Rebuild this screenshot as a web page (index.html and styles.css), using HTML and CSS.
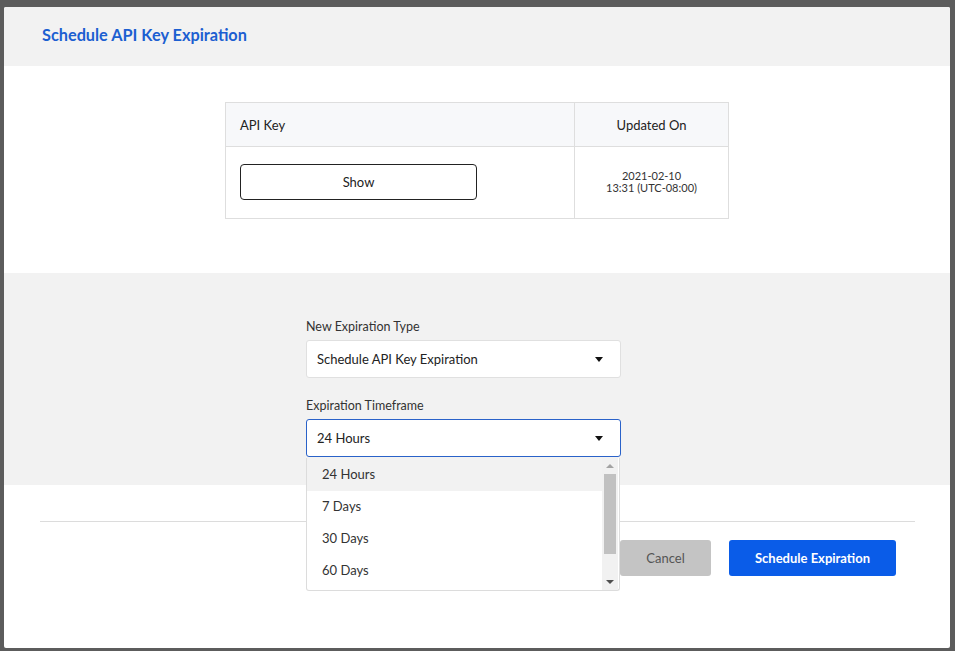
FILE: index.html
```html
<!DOCTYPE html>
<html lang="en">

<head>
    <meta charset="UTF-8">
    <title>Schedule API Key Expiration</title>
    <link rel="stylesheet" href="styles.css">
</head>

<body>
    <div class="modal">
        <header class="modal-head">
            <h1>Schedule API Key Expiration</h1>
        </header>

        <section class="key-section">
            <table class="key-table">
                <thead>
                    <tr>
                        <th class="col-key">API Key</th>
                        <th class="col-date">Updated On</th>
                    </tr>
                </thead>
                <tbody>
                    <tr>
                        <td class="col-key"><button class="show-btn">Show</button></td>
                        <td class="col-date date-cell">2021-02-10<br>13:31 (UTC-08:00)</td>
                    </tr>
                </tbody>
            </table>
        </section>

        <section class="form-section">
            <div class="form">
                <label class="field-label">New Expiration Type</label>
                <div class="select">
                    <span>Schedule API Key Expiration</span>
                    <i class="caret"></i>
                </div>

                <label class="field-label">Expiration Timeframe</label>
                <div class="select-wrap">
                    <div class="select focused">
                        <span>24 Hours</span>
                        <i class="caret"></i>
                    </div>
                    <div class="dropdown">
                        <ul class="options">
                            <li class="active">24 Hours</li>
                            <li>7 Days</li>
                            <li>30 Days</li>
                            <li>60 Days</li>
                        </ul>
                        <div class="scrollbar">
                            <i class="arrow up"></i>
                            <div class="thumb"></div>
                            <i class="arrow down"></i>
                        </div>
                    </div>
                </div>
            </div>
        </section>

        <footer class="modal-foot">
            <div class="actions">
                <button class="btn cancel">Cancel</button>
                <button class="btn primary">Schedule Expiration</button>
            </div>
        </footer>
    </div>
</body>

</html>
```

FILE: styles.css
```css
* {
    box-sizing: border-box;
}

body {
    margin: 0;
    background-color: #5c5c5c;
    font-family: Lato, "Open Sans", sans-serif;
    color: #333;
}

.modal {
    margin: 7px 5px 0 4px;
    width: 946px;
    height: 641px;
    background-color: #fff;
    border-radius: 2px;
    display: flex;
    flex-direction: column;
}

.modal-head {
    height: 59px;
    background-color: #f2f2f2;
    border-radius: 2px 2px 0 0;
    padding: 17px 0 0 38px;
}

.modal-head h1 {
    margin: 0;
    font-size: 16.3px;
    font-weight: 700;
    color: #1c5fd1;
    line-height: 22px;
}

/* table */

.key-section {
    height: 207px;
    padding-top: 36px;
    display: flex;
    justify-content: center;
    align-items: flex-start;
}

.key-table {
    width: 504px;
    border-collapse: collapse;
    font-size: 13px;
}

.key-table th,
.key-table td {
    border: 1px solid #dedede;
}

.key-table th {
    height: 44px;
    font-weight: 400;
    background-color: #f7f8fa;
    color: #222;
}

.key-table td {
    height: 72px;
    padding-bottom: 2px;
}

.col-key {
    width: 349px;
    text-align: left;
    padding: 0 14px;
}

.col-date {
    text-align: center;
}

.date-cell {
    font-size: 11px;
    line-height: 12px;
    color: #333;
}

.show-btn {
    width: 237px;
    height: 36px;
    background-color: #fff;
    border: 1px solid #222;
    border-radius: 4px;
    font-family: inherit;
    font-size: 13px;
    color: #222;
    padding: 0;
}

/* form */

.form-section {
    height: 212px;
    background-color: #f2f2f2;
    padding: 46px 0 0 302px;
}

.form {
    width: 315px;
    display: flex;
    flex-direction: column;
}

.field-label {
    font-size: 12.5px;
    color: #333;
    line-height: 15px;
    margin-bottom: 6px;
}

.select {
    height: 38px;
    background-color: #fff;
    border: 1px solid #e0e0e0;
    border-radius: 3px;
    display: flex;
    align-items: center;
    justify-content: space-between;
    padding: 0 17px 0 10px;
    font-size: 13px;
    color: #222;
    margin-bottom: 20px;
}

.select.focused {
    border-color: #2a62c9;
    margin-bottom: 0;
}

.caret {
    width: 0;
    height: 0;
    border-left: 4px solid transparent;
    border-right: 4px solid transparent;
    border-top: 5px solid #111;
}

.select-wrap {
    position: relative;
}

.dropdown {
    position: absolute;
    top: 39px;
    left: 0;
    width: 314px;
    height: 133px;
    background-color: #fff;
    border: 1px solid #dcdcdc;
    border-top: none;
    border-radius: 0 0 3px 3px;
    display: flex;
    z-index: 2;
}

.options {
    list-style: none;
    margin: 0;
    padding: 0;
    flex: 1;
}

.options li {
    height: 32px;
    padding: 0 0 2px 15px;
    display: flex;
    align-items: center;
    font-size: 13px;
    color: #333;
}

.options li.active {
    background-color: #f2f2f2;
    height: 33px;
}

.scrollbar {
    width: 16px;
    background-color: #f1f1f1;
    margin-right: 1px;
    display: flex;
    flex-direction: column;
    align-items: center;
    padding-top: 6px;
}

.thumb {
    width: 12px;
    height: 80px;
    background-color: #c1c1c1;
    margin: 6px 0 auto;
}

.arrow {
    width: 0;
    height: 0;
    border-left: 4px solid transparent;
    border-right: 4px solid transparent;
}

.arrow.up {
    border-bottom: 4px solid #a3a3a3;
}

.arrow.down {
    border-top: 4px solid #505050;
    margin-bottom: 6px;
}

/* footer */

.modal-foot {
    flex: 1;
    padding: 36px 35px 0 36px;
}

.actions {
    border-top: 1px solid #dcdcdc;
    padding: 18px 19px 0 0;
    display: flex;
    justify-content: flex-end;
    gap: 18px;
}

.btn {
    height: 36px;
    border: none;
    border-radius: 3px;
    font-family: inherit;
    font-size: 13px;
}

.cancel {
    width: 91px;
    background-color: #c4c4c4;
    color: #555;
}

.primary {
    width: 167px;
    background-color: #0a5ce8;
    color: #fff;
    font-weight: 700;
}
```
